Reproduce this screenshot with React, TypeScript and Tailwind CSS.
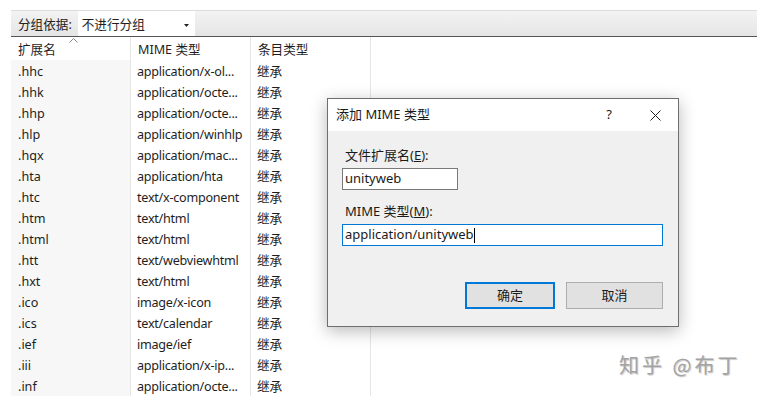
const ROWS: [string, string][] = [
  [".hhc", "application/x-ol..."],
  [".hhk", "application/octe..."],
  [".hhp", "application/octe..."],
  [".hlp", "application/winhlp"],
  [".hqx", "application/mac..."],
  [".hta", "application/hta"],
  [".htc", "text/x-component"],
  [".htm", "text/html"],
  [".html", "text/html"],
  [".htt", "text/webviewhtml"],
  [".hxt", "text/html"],
  [".ico", "image/x-icon"],
  [".ics", "text/calendar"],
  [".ief", "image/ief"],
  [".iii", "application/x-ip..."],
  [".inf", "application/octe..."],
];

const font = { fontFamily: '"Noto Sans", "Noto Sans CJK SC", sans-serif' };

const AddMimeDialog = () => (
  <div className="absolute left-[327px] top-[98px] w-[352px] h-[229px] border border-[#6e6e6e] bg-[#f0f0f0] shadow-[0_4px_16px_rgba(0,0,0,0.28)] flex flex-col">
    <div className="h-[32px] bg-white flex items-center pl-[8px] text-[13px] text-[#1a1a1a]">
      <span className="flex-1">添加 MIME 类型</span>
      <span className="w-[46px] text-center text-[13px]">?</span>
      <span className="w-[46px] flex justify-center">
        <svg width="11" height="11" viewBox="0 0 11 11">
          <path d="M0.5 0.5 L10.5 10.5 M10.5 0.5 L0.5 10.5" stroke="#222" strokeWidth="1" />
        </svg>
      </span>
    </div>
    <div className="flex flex-col px-[14px] pt-[15px] text-[13px] text-[#1a1a1a]">
      <span className="pl-[3px] leading-[18px]">
        文件扩展名(<u>E</u>):
      </span>
      <div className="mt-[4px] w-[116px] h-[22px] border border-[#7a7a7a] bg-white flex items-center px-[2px]">
        unityweb
      </div>
      <span className="pl-[3px] mt-[12px] leading-[18px]">
        MIME 类型(<u>M</u>):
      </span>
      <div className="mt-[4px] w-[321px] h-[22px] border border-[#0078d7] bg-white flex items-center px-[2px]">
        application/unityweb
        <span className="w-px h-[15px] bg-black" />
      </div>
      <div className="flex justify-end gap-[11px] mt-[36px] pr-[1px]">
        <button className="w-[90px] h-[27px] border-2 border-[#0078d7] bg-[#e1e1e1] text-[13px]">确定</button>
        <button className="w-[97px] h-[27px] border border-[#adadad] bg-[#e1e1e1] text-[13px]">取消</button>
      </div>
    </div>
  </div>
);

export default function App() {
  return (
    <div className="relative w-[757px] h-[396px] bg-white overflow-hidden text-[12.6px] text-[#1e1e1e]" style={font}>
      <div className="pt-[10px] pl-[11px] flex flex-col h-full">
        <div className="h-[28px] border-t border-[#dcdcdc] border-b border-b-[#555] bg-gradient-to-b from-[#f3f3f3] to-[#e5e5e5] flex items-center">
          <span className="pl-[7px] pr-[6px] pt-[3px] text-[#222]">分组依据:</span>
          <div className="h-full w-[117px] bg-white flex items-center pl-[4px] pt-[3px] relative">
            <span>不进行分组</span>
            <svg className="absolute left-[106px] top-[13px]" width="5" height="3" viewBox="0 0 5 3">
              <path d="M0 0 H5 L2.5 3 Z" fill="#222" />
            </svg>
          </div>
        </div>
        <div className="flex flex-1">
          <div className="w-[120px] flex flex-col border-r border-[#e6e6e6]">
            <div className="h-[23px] flex items-center pl-[7px] pt-[3px] relative bg-white">
              扩展名
              <svg className="absolute left-[58px] top-[1px]" width="9" height="5" viewBox="0 0 9 5">
                <path d="M0.5 4.5 L4.5 0.5 L8.5 4.5" stroke="#8a8a8a" fill="none" />
              </svg>
            </div>
            <div className="flex-1 bg-[#f7f7f7]">
              {ROWS.map(([ext]) => (
                <div key={ext} className="h-[21px] flex items-center pl-[7px] pt-[4px]">
                  {ext}
                </div>
              ))}
            </div>
          </div>
          <div className="w-[120px] flex flex-col border-r border-[#e6e6e6]">
            <div className="h-[23px] flex items-center pl-[7px] pt-[3px]">MIME 类型</div>
            {ROWS.map(([ext, mime]) => (
              <div key={ext} className="h-[21px] flex items-center pl-[6px] pt-[4px] whitespace-nowrap tracking-[-0.25px]">
                {mime}
              </div>
            ))}
          </div>
          <div className="w-[120px] flex flex-col border-r border-[#e6e6e6]">
            <div className="h-[23px] flex items-center pl-[7px] pt-[3px]">条目类型</div>
            {ROWS.map(([ext]) => (
              <div key={ext} className="h-[21px] flex items-center pl-[6px] pt-[4px]">
                继承
              </div>
            ))}
          </div>
          <div className="flex-1" />
        </div>
      </div>
      <AddMimeDialog />
      <div
        className="absolute left-[619px] top-[350px] text-[20px] text-[#a3a3a3] tracking-[3px] [text-shadow:1px_1px_1px_rgba(0,0,0,0.22)]"
        style={{ fontFamily: '"Noto Sans CJK SC", sans-serif' }}
      >
        知乎 @布丁
      </div>
    </div>
  );
}
